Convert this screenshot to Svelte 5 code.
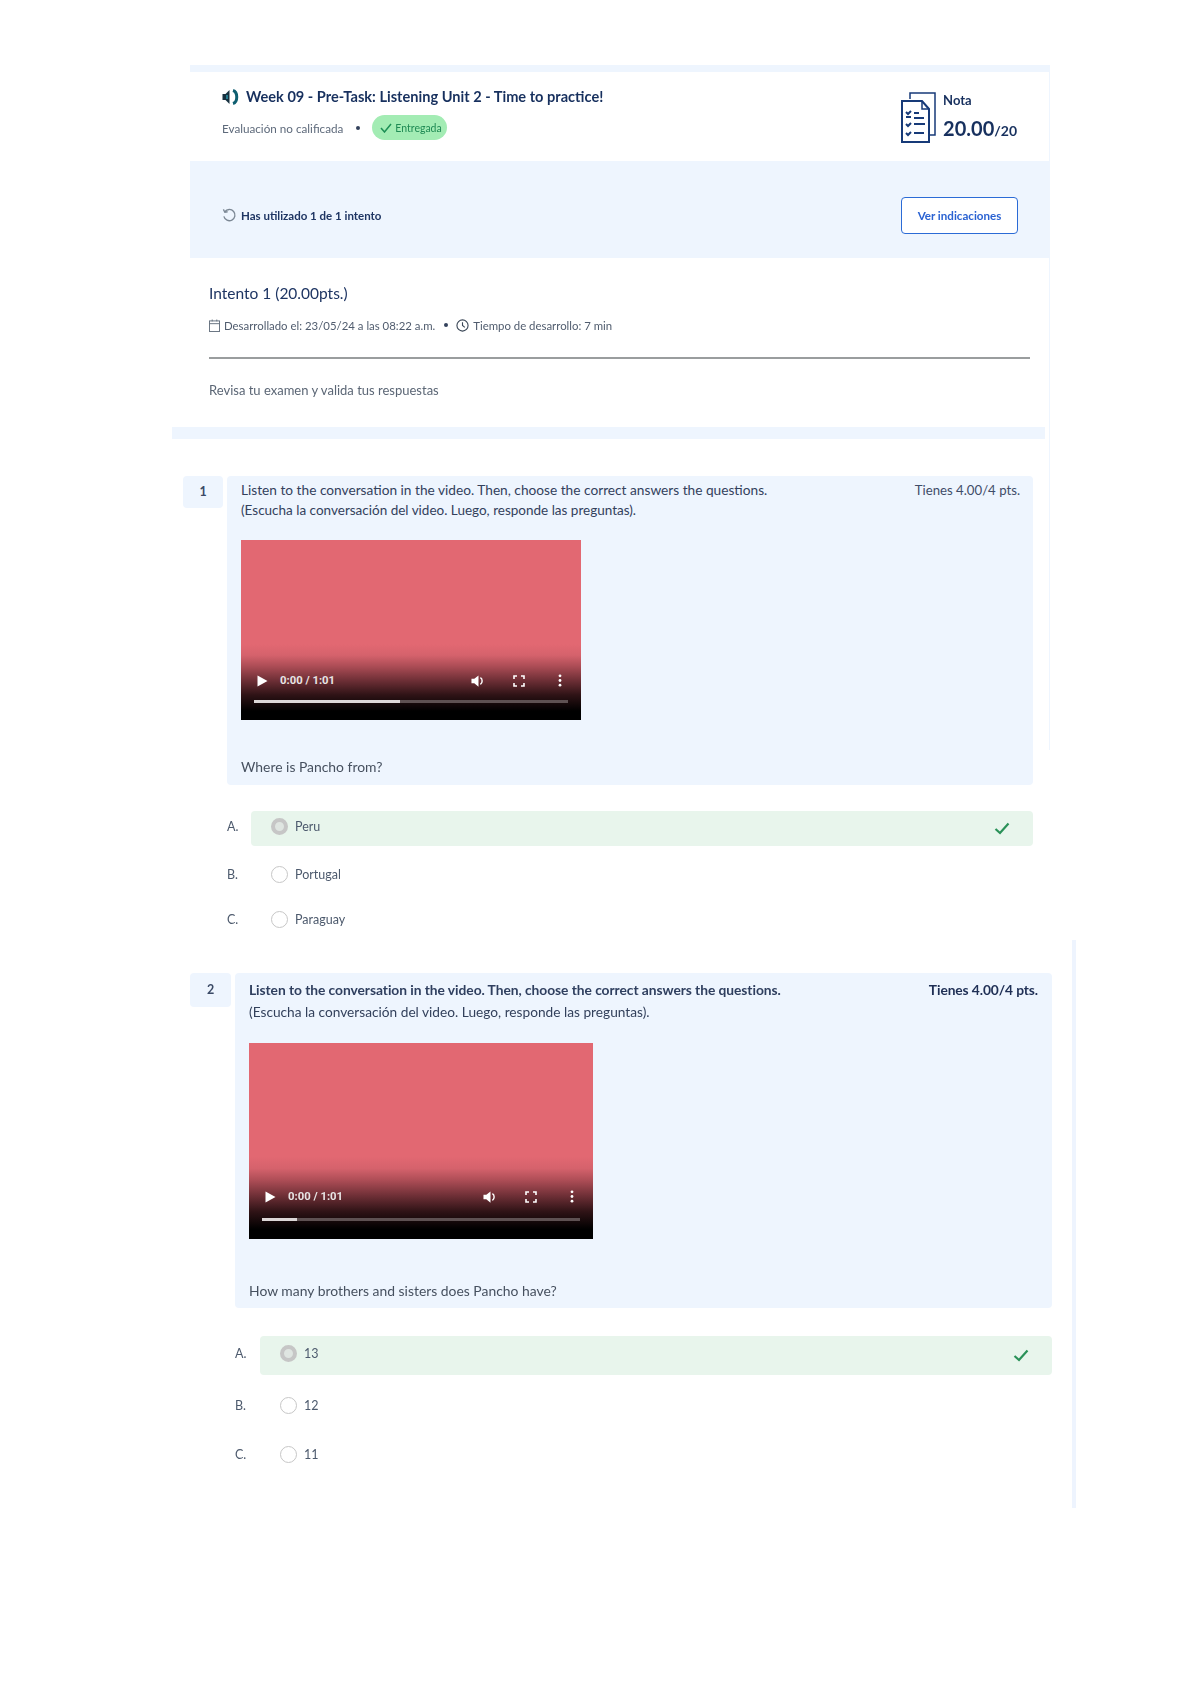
<script>
  const questions = [
    {
      n: 1,
      es: "(Escucha la conversación del video. Luego, responde las preguntas).",
      ask: "Where is Pancho from?",
      played: 46.5,
      opts: ["Peru", "Portugal", "Paraguay"]
    },
    {
      n: 2,
      es: "(Escucha la conversación del video. Luego, responde las preguntas).",
      ask: "How many brothers and sisters does Pancho have?",
      played: 11,
      opts: ["13", "12", "11"]
    }
  ];
  const letters = ["A.", "B.", "C."];
</script>

<main class="page">
  <div class="sheet">
    <section class="card">
      <div class="strip"></div>

      <header class="head">
        <div>
          <h1>
            <svg class="ic-audio" viewBox="0 0 18 16" width="18" height="16">
              <path d="M0.500 5h3l4-4v14l-4-4h-3z" fill="#16303f" />
              <path d="M11 1.500c5 1.500 5 11.500 0 13" fill="none" stroke="#0f5f70" stroke-width="3" />
              <path d="M5 6v4" stroke="#2a8fa3" stroke-width="1.600" />
            </svg>
            Week 09 - Pre-Task: Listening Unit 2 - Time to practice!
          </h1>
          <div class="sub">
            <span>Evaluación no calificada</span>
            <i class="dot"></i>
            <span class="pill">
              <svg viewBox="0 0 12 10" width="12" height="10"><path d="M1 5l3.500 4L11 1" fill="none" stroke="#1c8f55" stroke-width="1.500" /></svg>
              Entregada
            </span>
          </div>
        </div>
        <div class="grade">
          <svg viewBox="0 0 35 51" width="35" height="51" fill="none" stroke="#173a78" stroke-width="1.500">
            <path d="M9 7V1h25v42h-5" />
            <path d="M1 9h20l7 8v33H1z" fill="#fff" stroke-width="2" />
            <path d="M21 9v8h7" />
            <path d="M5 20l2 2 3-3M13 21h5M5 25h5M13 26h10M5 32l2 2 3-3M13 32h11M5 41l2 2 3-3M13 41h10" stroke-width="2" />
          </svg>
          <div>
            <div class="nota">Nota</div>
            <div class="score">20.00<small>/20</small></div>
          </div>
        </div>
      </header>

      <div class="band">
        <div class="used">
          <svg viewBox="0 0 16 16" width="15" height="15" fill="none" stroke="#7b8794" stroke-width="1.400">
            <path d="M3 4a6 6 0 1 1-1 5" />
            <path d="M1.500 1.500L3 4.500l3-.500" />
          </svg>
          Has utilizado 1 de 1 intento
        </div>
        <button class="btn">Ver indicaciones</button>
      </div>

      <div class="body">
        <h2>Intento 1 (20.00pts.)</h2>
        <div class="meta">
          <svg viewBox="0 0 12 14" width="11" height="13" fill="none" stroke="#5f6b7a" stroke-width="1">
            <rect x="0.500" y="2" width="11" height="11.500" />
            <path d="M0.500 5h11M3.500 0.500v2M8.500 0.500v2" />
          </svg>
          <span>Desarrollado el: 23/05/24 a las 08:22 a.m.</span>
          <i class="dot"></i>
          <svg viewBox="0 0 14 14" width="13" height="13" fill="none" stroke="#3a4656" stroke-width="1.200">
            <circle cx="7" cy="7" r="6" />
            <path d="M7 3.500V7l2.500 2" />
          </svg>
          <span>Tiempo de desarrollo: 7 min</span>
        </div>
        <hr />
        <p>Revisa tu examen y valida tus respuestas</p>
      </div>
    </section>

    <div class="strip wide"></div>
  </div>

  {#each questions as q (q.n)}
    <div class="wrap" class:second={q.n === 2}>
      <article class="question">
        <div class="badge">{q.n}</div>
        <div class="panel">
          <div class="top">
            <div>
              <div class="en">Listen to the conversation in the video. Then, choose the correct answers the questions.</div>
              <div class="es">{q.es}</div>
            </div>
            <div class="pts">Tienes 4.00/4 pts.</div>
          </div>

          <div class="video">
            <div class="controls">
              <svg viewBox="0 0 12 12" width="12" height="12"><path d="M1.500 0.500l10 5.500-10 5.500z" fill="#fff" /></svg>
              <span class="time">0:00 / 1:01</span>
              <svg class="vol" viewBox="0 0 16 14" width="15" height="14">
                <path d="M0.500 4.500h3L8 1v12L3.500 9.500h-3z" fill="#fff" />
                <path d="M10 3.500c2.500 1.500 2.500 5.500 0 7" fill="none" stroke="#fff" stroke-width="1.500" />
              </svg>
              <svg class="full" viewBox="0 0 12 12" width="12" height="12" fill="none" stroke="#fff" stroke-width="1.600">
                <path d="M1 4V1h3M8 1h3v3M11 8v3H8M4 11H1V8" />
              </svg>
              <svg class="more" viewBox="0 0 4 14" width="4" height="13" fill="#fff">
                <circle cx="2" cy="2" r="1.500" /><circle cx="2" cy="7" r="1.500" /><circle cx="2" cy="12" r="1.500" />
              </svg>
            </div>
            <div class="track"><div class="played" style="width: {q.played}%"></div></div>
          </div>

          <div class="ask">{q.ask}</div>
        </div>
      </article>

      <div class="opts">
        {#each q.opts as opt, i}
          <div class="row" class:sel={i === 0}>
            <span class="letter">{letters[i]}</span>
            <div class="answer">
              <span class="radio"></span>
              <span class="label">{opt}</span>
              {#if i === 0}
                <svg class="tick" viewBox="0 0 16 13" width="16" height="13">
                  <path d="M1.500 7l4.500 4L14.500 1.500" fill="none" stroke="#2a9158" stroke-width="2.200" />
                </svg>
              {/if}
            </div>
          </div>
        {/each}
      </div>
    </div>
  {/each}
</main>

<style>
  :global(body) {
    margin: 0;
    background: #fff;
  }

  .page {
    width: 1200px;
    height: 1696px;
    padding-top: 65px;
    box-sizing: border-box;
    font-family: Lato, "Open Sans", sans-serif;
    color: #33415c;
    overflow: hidden;
  }
  .page > * {
    filter: blur(0.45px);
  }

  .sheet {
    margin-left: 190px;
    width: 860px;
    position: relative;
  }
  /* faint edge of the page, runs on past the card */
  .sheet::after {
    content: "";
    position: absolute;
    top: 0;
    right: 0;
    width: 1px;
    height: 685px;
    background: #eef5fe;
  }

  .strip {
    height: 7px;
    background: #eef5fe;
  }
  .strip.wide {
    height: 12px;
    width: 873px;
    margin-left: -18px;
  }

  .head {
    height: 89px;
    box-sizing: border-box;
    padding: 13px 33px 0 32px;
    display: flex;
    justify-content: space-between;
  }
  h1 {
    margin: 2px 0 0;
    font-size: 14.600px;
    line-height: 20px;
    font-weight: 700;
    color: #17305e;
    display: flex;
    align-items: center;
    gap: 6px;
  }
  .sub {
    margin-top: 8px;
    display: flex;
    align-items: center;
    font-size: 11.700px;
    color: #5e6a7b;
    height: 25px;
  }
  .dot {
    width: 4px;
    height: 4px;
    border-radius: 50%;
    background: #33415c;
    margin: 0 12px 0 13px;
  }
  .pill {
    display: flex;
    align-items: center;
    gap: 3px;
    height: 25px;
    width: 75px;
    box-sizing: border-box;
    padding-left: 8px;
    border-radius: 13px;
    background: #a3ecb4;
    color: #1f8a54;
    font-size: 10.500px;
  }

  .grade {
    display: flex;
    gap: 7px;
    margin-top: 7px;
    align-items: flex-start;
  }
  .nota {
    font-size: 13px;
    line-height: 16px;
    font-weight: 700;
    color: #17305e;
  }
  .score {
    font-size: 20px;
    line-height: 28px;
    font-weight: 700;
    color: #17305e;
    margin-top: 6px;
  }
  .score small {
    font-size: 14px;
  }

  .band {
    height: 97px;
    box-sizing: border-box;
    background: #eef5fe;
    padding: 11px 32px 0;
    display: flex;
    align-items: center;
    justify-content: space-between;
  }
  .used {
    display: flex;
    align-items: center;
    gap: 4px;
    font-size: 11.500px;
    font-weight: 700;
    color: #1e3563;
  }
  .btn {
    width: 117px;
    height: 37px;
    padding: 0;
    border: 1.500px solid #2b6bd6;
    border-radius: 4px;
    background: #fff;
    color: #2a62d2;
    font: 700 11.600px Lato, sans-serif;
  }

  .body {
    padding: 23px 20px 27px 19px;
  }
  h2 {
    margin: 0;
    font-size: 15.500px;
    line-height: 24px;
    font-weight: 400;
    color: #1e3563;
  }
  .meta {
    margin-top: 11px;
    height: 18px;
    display: flex;
    align-items: center;
    gap: 4px;
    font-size: 11.400px;
    color: #505c6e;
  }
  .meta .dot {
    margin: 0 4px 0 5px;
  }
  hr {
    margin: 23px 0 0;
    border: 0;
    height: 1.500px;
    background: #9a9d9e;
  }
  .body p {
    margin: 21px 0 0;
    font-size: 13px;
    line-height: 20px;
    color: #5b6675;
  }

  /* question 1 */
  .wrap {
    --left: 183px;
    --right: 1033px;
    --en: 13.700px;
    --es: 13.500px;
    --pts: 13.200px;
    --line: 20px;
    margin-top: 37px;
    margin-left: var(--left);
    width: calc(var(--right) - var(--left));
  }
  /* question 2 sits a little bigger in the document */
  .wrap.second {
    --left: 190px;
    --right: 1052px;
    --en: 13.800px;
    --es: 13.700px;
    --pts: 13.800px;
    --line: 22px;
    margin-top: 0;
    width: 886px;
    padding: 33px 0 45px;
    box-sizing: border-box;
    height: 568px;
    border-right: 4px solid #eef4fe;
  }
  .wrap.second .question {
    width: 862px;
  }

  .question {
    display: flex;
    gap: 4px;
  }
  .badge {
    flex: none;
    width: 40px;
    height: 32px;
    border-radius: 4px;
    background: #eef5fe;
    display: grid;
    place-items: center;
    font-size: 12.500px;
    font-weight: 700;
    color: #3b4a66;
  }
  .second .badge {
    width: 41px;
    height: 34px;
  }
  .panel {
    flex: 1;
    box-sizing: border-box;
    height: 309px;
    padding: 4px 13px 8px 14px;
    border-radius: 4px;
    background: #eef5fe;
  }
  .second .panel {
    height: 335px;
    padding: 6px 14px 6px 14px;
  }
  .top {
    display: flex;
    justify-content: space-between;
    line-height: var(--line);
  }
  .en {
    font-size: var(--en);
  }
  .es {
    font-size: var(--es);
  }
  .pts {
    font-size: var(--pts);
    color: #3f4c68;
  }
  .second .en {
    font-weight: 700;
    color: #2f3f5f;
    letter-spacing: -0.05px;
  }
  .second .pts {
    font-weight: 700;
    color: #1f2f55;
    letter-spacing: -0.1px;
  }

  .video {
    width: 340px;
    height: 180px;
    margin-top: 20px;
    box-sizing: border-box;
    padding: 0 13px 17px;
    display: flex;
    flex-direction: column;
    justify-content: flex-end;
    gap: 12px;
    background: linear-gradient(#e26872 58%, #d5626c 64%, #ad4d56 70%, #6e2f36 78%, #2f1316 86%, #000 95%);
  }
  .second .video {
    width: 344px;
    height: 196px;
    margin-top: 20px;
    padding-bottom: 18px;
    gap: 14px;
  }
  .controls {
    display: flex;
    align-items: center;
    height: 14px;
    padding-left: 2px;
  }
  .time {
    margin-left: 12px;
    font: 700 11.300px Roboto, sans-serif;
    color: #e8e4e4;
  }
  .vol {
    margin-left: auto;
  }
  .full {
    margin-left: 27px;
  }
  .more {
    margin: 0 6px 0 33px;
  }
  .track {
    height: 3px;
    background: #5e5152;
  }
  .played {
    height: 100%;
    background: #dcd7d7;
  }

  .ask {
    margin-top: 37px;
    font-size: 13.900px;
    line-height: var(--line);
    color: #46505f;
  }
  .second .ask {
    margin-top: 41px;
  }

  .opts {
    margin-top: 26px;
    margin-left: 44px;
    display: flex;
    flex-direction: column;
    gap: 5px;
  }
  .second .opts {
    margin-top: 28px;
    margin-left: 45px;
    height: 127px;
    overflow: hidden;
    width: 817px;
  }
  .row {
    flex: none;
    height: 40px;
    display: flex;
    align-items: center;
    font-size: 12.500px;
    color: #4d5a6d;
  }
  .second .row {
    height: 44px;
  }
  .row.sel {
    height: 35px;
    margin-bottom: 4px;
  }
  .second .row.sel {
    height: 39px;
  }
  .letter {
    flex: none;
    width: 24px;
  }
  .second .letter {
    width: 25px;
  }
  .answer {
    flex: 1;
    height: 100%;
    box-sizing: border-box;
    padding: 0 20px;
    display: flex;
    align-items: center;
    gap: 7px;
    border-radius: 4px;
  }
  .sel .answer {
    background: #e8f5ec;
    padding-bottom: 4px;
  }
  .sel .letter {
    margin-bottom: 4px;
  }
  .radio {
    flex: none;
    width: 17px;
    height: 17px;
    box-sizing: border-box;
    border: 1px solid #c6c6c6;
    border-radius: 50%;
    background: #fff;
  }
  .sel .radio {
    border: 4px solid #c6c6c6;
    background: #dfe5e1;
  }
  .tick {
    margin-left: auto;
    margin-right: 3px;
    margin-top: 4px;
  }
</style>
